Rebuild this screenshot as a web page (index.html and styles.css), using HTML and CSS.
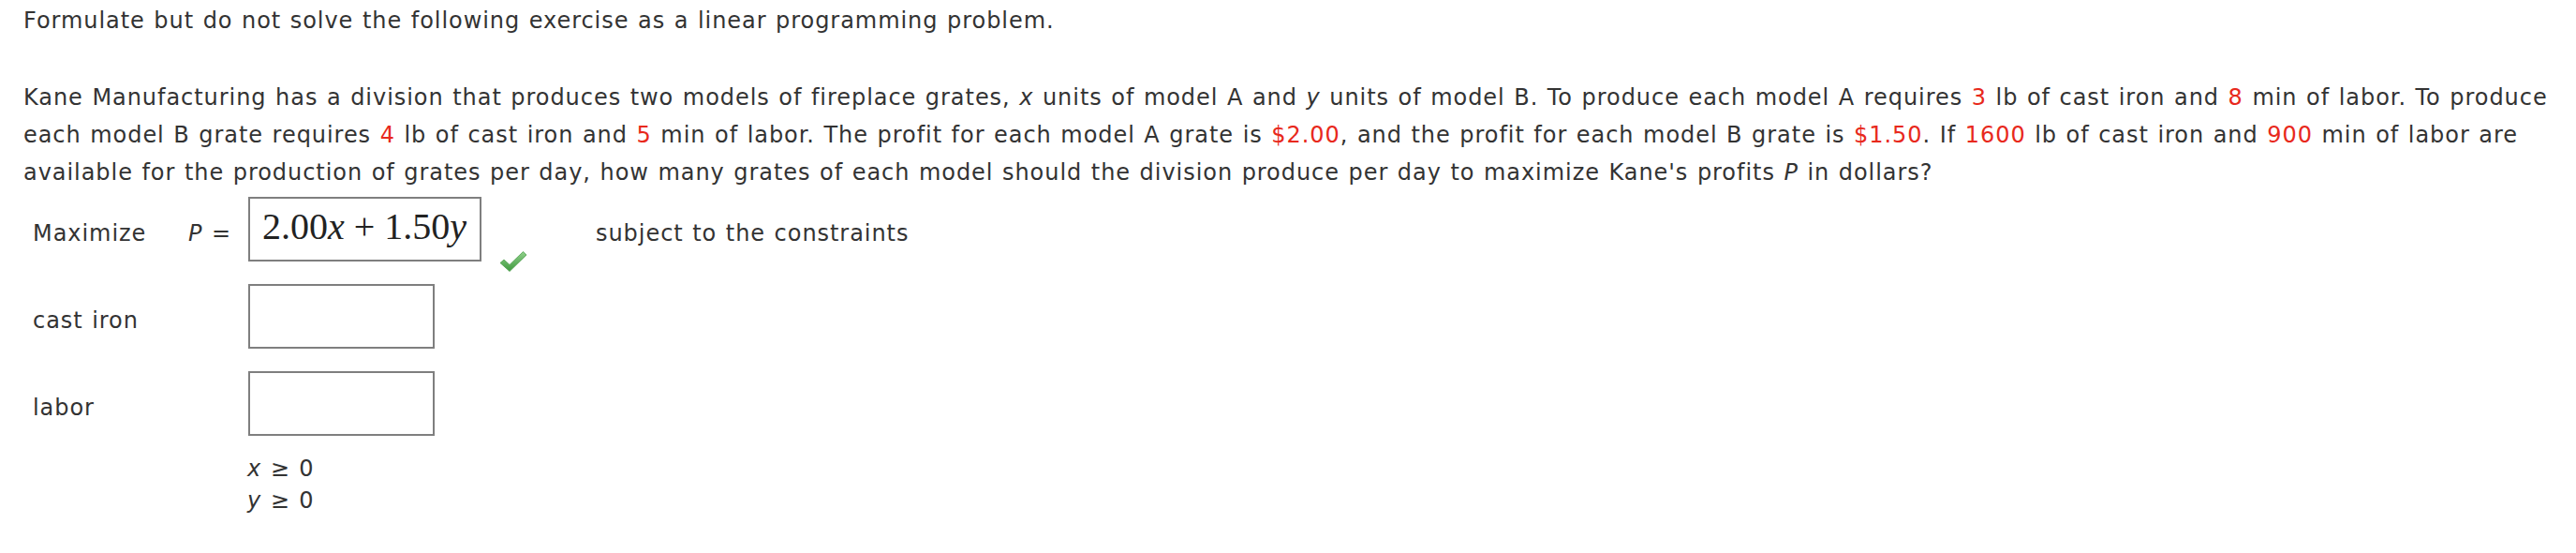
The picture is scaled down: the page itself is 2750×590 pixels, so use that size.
FILE: index.html
```html
<!DOCTYPE html>
<html lang="en">
<head>
<meta charset="utf-8">
<title>Linear programming exercise</title>
<link rel="stylesheet" href="styles.css">
</head>
<body>
<div class="page">
  <p class="intro">Formulate but do not solve the following exercise as a linear programming problem.</p>
  <p class="problem">Kane Manufacturing has a division that produces two models of fireplace grates, <i>x</i> units of model A and <i>y</i> units of model B. To produce each model A requires <span class="red">3</span> lb of cast iron and <span class="red">8</span> min of labor. To produce each model B grate requires <span class="red">4</span> lb of cast iron and <span class="red">5</span> min of labor. The profit for each model A grate is <span class="red">$2.00</span>, and the profit for each model B grate is <span class="red">$1.50</span>. If <span class="red">1600</span> lb of cast iron and <span class="red">900</span> min of labor are available for the production of grates per day, how many grates of each model should the division produce per day to maximize Kane's profits <i>P</i> in dollars?</p>

  <div class="lp">
    <div class="row">
      <span class="label">Maximize</span>
      <span class="pcol"><i>P</i> =</span>
      <span class="box box-wide"><span class="math">2.00<i>x</i><span class="op">+</span>1.50<i>y</i></span></span>
      <svg class="check" width="30" height="24" viewBox="0 0 30 24" aria-hidden="true">
        <defs>
          <linearGradient id="g" x1="0" y1="0" x2="0" y2="1">
            <stop offset="0" stop-color="#8fd08a"/>
            <stop offset="1" stop-color="#3f9a3f"/>
          </linearGradient>
        </defs>
        <path d="M1 13.5 L5 10 L11 15.5 L25.5 1.5 L29 5 L11 22.5 Z" fill="url(#g)" stroke="#4f9f4f" stroke-width="0.8" stroke-linejoin="round"/>
      </svg>
      <span class="subject">subject to the constraints</span>
    </div>
    <div class="row">
      <span class="label">cast iron</span>
      <span class="pcol"></span>
      <span class="box box-narrow"></span>
    </div>
    <div class="row">
      <span class="label">labor</span>
      <span class="pcol"></span>
      <span class="box box-narrow"></span>
    </div>
    <div class="nonneg">
      <div><i>x</i> ≥ 0</div>
      <div><i>y</i> ≥ 0</div>
    </div>
  </div>
</div>
</body>
</html>
```

FILE: styles.css
```css
html, body {
  margin: 0;
  padding: 0;
  background: #ffffff;
}

.page {
  padding: 2px 0 0 25px;
  font-family: "DejaVu Sans", Verdana, sans-serif;
  font-size: 24px;
  line-height: 40px;
  letter-spacing: 0.95px;
  word-spacing: 1px;
  color: #333333;
}

.page p {
  margin: 0;
}

.problem {
  margin-top: 42px !important;
  width: 2722px;
}

.red {
  color: #e8291c;
}

.lp {
  margin-left: 10px;
  margin-top: 6px;
}

.row {
  display: flex;
  align-items: flex-start;
  margin-bottom: 24px;
}

.label {
  width: 166px;
  padding-top: 19px;
}

.pcol {
  width: 64px;
  padding-top: 19px;
}

.box {
  display: block;
  box-sizing: border-box;
  height: 69px;
  border: 2px solid #7f7f7f;
  background: #ffffff;
}

.box-wide {
  width: 249px;
}

.box-narrow {
  width: 199px;
}

.math {
  display: block;
  font-family: "Liberation Serif", "Times New Roman", serif;
  font-size: 40px;
  line-height: 60px;
  letter-spacing: 0;
  word-spacing: 0;
  padding-left: 13px;
  color: #222222;
  white-space: nowrap;
}

.op {
  margin: 0 10px;
}

.check {
  display: block;
  margin: 57px 0 -12px 19px;
}

.subject {
  margin-left: 73px;
  padding-top: 19px;
}

.nonneg {
  margin-left: 229px;
  margin-top: -6px;
  line-height: 34px;
}
```
